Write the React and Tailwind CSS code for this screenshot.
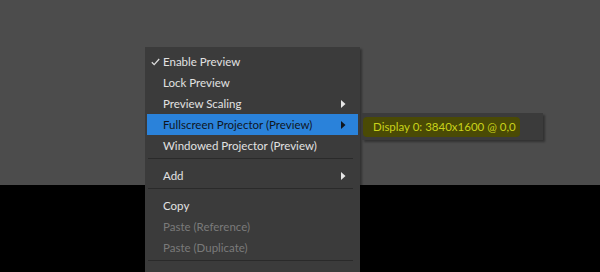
const items = [
  { label: "Enable Preview", checked: true },
  { label: "Lock Preview" },
  { label: "Preview Scaling", sub: true },
  { label: "Fullscreen Projector (Preview)", sub: true, active: true },
  { label: "Windowed Projector (Preview)" },
  { sep: true },
  { label: "Add", sub: true },
  { sep: true },
  { label: "Copy" },
  { label: "Paste (Reference)", disabled: true },
  { label: "Paste (Duplicate)", disabled: true },
  { sep: true },
  { label: "Copy Filters" },
];

const Arrow = ({ dark }) => (
  <svg width="5" height="8" viewBox="0 0 5 8" className="ml-auto">
    <path d="M0 0 L4.5 4 L0 8 Z" fill={dark ? "#10161e" : "#e6e6e6"} />
  </svg>
);

const Check = () => (
  <svg width="9" height="8" viewBox="0 0 9 8" className="absolute left-[4px] top-[7px]">
    <path d="M0.8 4.2 L3.2 6.6 L8.2 1" stroke="#dcdcdc" strokeWidth="1.3" fill="none" />
  </svg>
);

export default function App() {
  return (
    <div
      className="relative w-[600px] h-[272px] overflow-hidden bg-black"
      style={{ fontFamily: 'Lato, "Open Sans", sans-serif' }}
    >
      <div className="h-[185px] bg-[#4c4c4c]" />

      <div className="absolute left-[145px] top-[47px] w-[215px] bg-[#3b3b3b] pt-[4px] shadow-[2px_2px_2px_rgba(0,0,0,0.35)]">
        {items.map((it, i) =>
          it.sep ? (
            <div key={i} className="h-[9px] pt-[2px] px-[3px] pr-[7px]">
              <div className="h-px bg-[#2a2a2a]" />
            </div>
          ) : (
            <div
              key={i}
              className={`relative mx-[2px] h-[21px] flex items-center pl-[16px] pr-[12px] text-[11.5px] ${
                it.active
                  ? "bg-[#2a82da] text-[#10161e]"
                  : it.disabled
                  ? "text-[#7a7a7a]"
                  : "text-[#e2e2e2]"
              }`}
            >
              {it.checked && <Check />}
              <span>{it.label}</span>
              {it.sub && <Arrow dark={it.active} />}
            </div>
          )
        )}
      </div>

      <div className="absolute left-[362px] top-[113px] w-[181px] h-[27px] bg-[#3b3b3b] shadow-[2px_2px_2px_rgba(0,0,0,0.35)] flex items-center">
        <div className="ml-[1px] h-[20px] pl-[10px] pr-[4px] flex items-center rounded-[4px] bg-[#4a4a05] text-[11.5px] text-[#c9d21a]">
          Display 0: 3840x1600 @ 0,0
        </div>
      </div>
    </div>
  );
}
